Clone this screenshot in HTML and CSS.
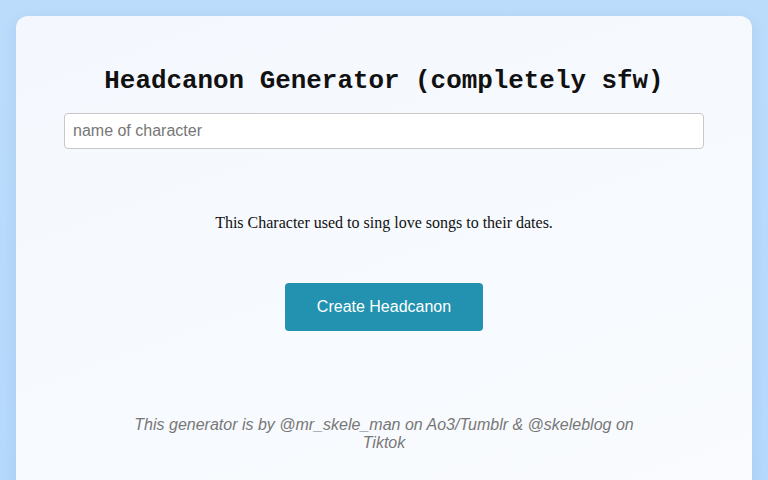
FILE: index.html
```html
<!DOCTYPE html>
<html lang="en">
  <head>
    <meta charset="UTF-8" />
    <meta name="viewport" content="width=device-width, initial-scale=1.0" />
    <title>Headcanon Generator</title>
    <link rel="stylesheet" href="styles.css">
  </head>
  <body>
    <div class="container">
      <h1>Headcanon Generator (completely sfw)</h1>
      <input type="text" id="characterName" class="name-input" placeholder="name of character" />
      <p class="result" id="result">This Character used to sing love songs to their dates.</p>
      <button class="create-button" id="createButton">Create Headcanon</button>
      <p class="credits">This generator is by @mr_skele_man on Ao3/Tumblr &amp; @skeleblog on Tiktok</p>
    </div>
  </body>
</html>
```

FILE: styles.css
```css
* {
  margin: 0;
  padding: 0;
  box-sizing: border-box;
}

body {
  min-height: 100vh;
  background: linear-gradient(180deg, #bcdcfb 0%, #b4d8fc 100%);
  font-family: "Liberation Serif", serif;
  padding: 16px;
}

.container {
  display: flex;
  flex-direction: column;
  align-items: center;
  background: linear-gradient(160deg, #f4f8fe 0%, #f7fafe 60%, #f9fbfe 100%);
  border-radius: 12px;
  padding: 50px 48px 60px;
  box-shadow: 0 4px 14px rgba(60, 110, 170, 0.12);
  min-height: 480px;
}

h1 {
  font-family: "Liberation Mono", monospace;
  font-weight: bold;
  font-size: 25.9px;
  line-height: 30px;
  color: #111;
  margin-bottom: 17px;
}

.name-input {
  width: 100%;
  height: 36px;
  padding: 0 8px;
  border: 1px solid #c8c8c8;
  border-radius: 4px;
  background: #fff;
  font-family: "Liberation Sans", sans-serif;
  font-size: 16px;
  color: #333;
}

.name-input::placeholder {
  color: #777;
}

.result {
  margin-top: 65px;
  font-size: 16px;
  line-height: 18px;
  color: #111;
  text-align: center;
}

.create-button {
  margin-top: 51px;
  width: 198px;
  height: 48px;
  border: none;
  border-radius: 4px;
  background: #2292b0;
  color: #fff;
  font-family: "Liberation Sans", sans-serif;
  font-size: 16px;
  cursor: pointer;
}

.credits {
  margin-top: 85px;
  max-width: 510px;
  font-family: "Liberation Sans", sans-serif;
  font-style: italic;
  font-size: 16px;
  line-height: 18px;
  color: #777;
  text-align: center;
}
```
